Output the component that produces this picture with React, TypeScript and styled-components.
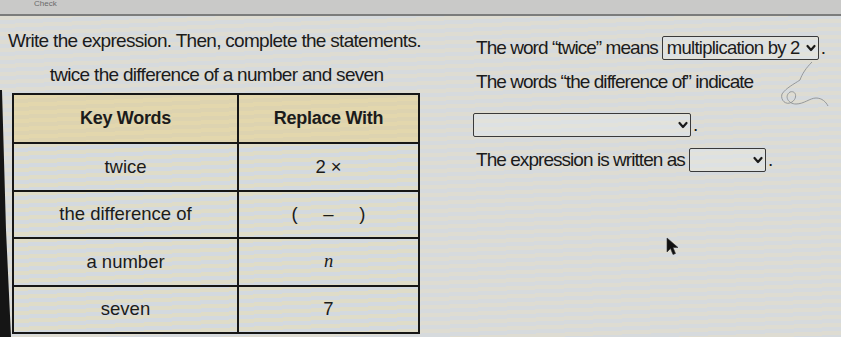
import React from "react"
import styled, { createGlobalStyle } from "styled-components"

const GlobalStyle = createGlobalStyle`
  html, body {
    margin: 0;
    padding: 0;
    background: #d9dbdb;
  }
  body {
    font-family: "Liberation Sans", Arial, sans-serif;
    color: #1b1b1b;
  }
`

const stripes = (a: string, b: string) => `
  repeating-linear-gradient(
    178deg,
    ${a} 0px,
    ${a} 4px,
    ${b} 4px,
    ${b} 8px
  )
`

const Screen = styled.div`
  position: relative;
  width: 841px;
  height: 337px;
  overflow: hidden;
  background: ${stripes("#dedcd2", "#d6dadd")};
`

const TopBar = styled.div`
  height: 14px;
  background: #c9c9c8;
  border-bottom: 2px solid #7b7c7c;
  overflow: hidden;
  padding-left: 34px;
`

const TopLabel = styled.span`
  display: block;
  font-size: 8px;
  line-height: 8px;
  color: #6a6a6a;
`

const Body = styled.div`
  display: grid;
  grid-template-columns: 420px 1fr;
`

const LeftColumn = styled.div`
  display: flex;
  flex-direction: column;
`

const Title = styled.div`
  margin: 13px 0 0 8px;
  height: 24px;
  line-height: 24px;
  font-size: 19px;
  letter-spacing: -0.7px;
  white-space: nowrap;
`

const Subtitle = styled.div`
  margin: 10px 0 0 13px;
  height: 24px;
  line-height: 24px;
  font-size: 19px;
  letter-spacing: -0.7px;
  text-align: center;
  white-space: nowrap;
`

const Table = styled.table`
  margin: 6px 0 0 12px;
  width: 408px;
  border-collapse: collapse;
  table-layout: fixed;
`

const HeadCell = styled.th`
  height: 47px;
  padding: 0;
  border: 2px solid #161616;
  background: ${stripes("#e3d7ad", "#ddd3b0")};
  font-size: 18px;
  font-weight: bold;
  letter-spacing: -0.3px;
  text-align: center;
`

const Cell = styled.td<{ $italic?: boolean }>`
  height: 45.5px;
  padding: 0;
  border: 2px solid #161616;
  background: ${stripes("#dfdcc8", "#d3d9df")};
  font-size: 18.5px;
  text-align: center;
  font-family: ${p => (p.$italic ? '"Liberation Serif", serif' : "inherit")};
  font-style: ${p => (p.$italic ? "italic" : "normal")};
  white-space: pre;
`

const RightColumn = styled.div`
  display: flex;
  flex-direction: column;
  padding-left: 56px;
`

const Line = styled.div<{ $top: number }>`
  display: flex;
  align-items: center;
  height: 24px;
  margin-top: ${p => p.$top}px;
  font-size: 19px;
  letter-spacing: -0.95px;
  white-space: nowrap;
`

const Select = styled.div<{ $width: number }>`
  display: flex;
  align-items: center;
  justify-content: space-between;
  box-sizing: border-box;
  width: ${p => p.$width}px;
  height: 24px;
  margin: 0 2px 0 4px;
  padding: 0 2px 0 4px;
  border: 1.5px solid #3a3a3a;
  border-radius: 2px;
  background: rgba(235, 237, 238, 0.35);
  font-size: 18.5px;
  letter-spacing: -0.75px;
`

const Chevron = () => (
  <svg width="10" height="8" viewBox="0 0 10 8">
    <polyline
      points="1.5,2 5,6 8.5,2"
      fill="none"
      stroke="#1b1b1b"
      strokeWidth="2.2"
      strokeLinecap="round"
      strokeLinejoin="round"
    />
  </svg>
)

const Cursor = styled.svg`
  position: absolute;
  left: 666px;
  top: 237px;
`

const Scribble = styled.svg`
  position: absolute;
  left: 770px;
  top: 60px;
`

const Bezel = styled.div`
  position: absolute;
  left: 0;
  top: 0;
  width: 14px;
  height: 337px;
  background: #151515;
  clip-path: polygon(0 90px, 2px 90px, 6px 230px, 11px 337px, 0 337px);
`

const rows: [string, string, boolean?][] = [
  ["twice", "2 ×"],
  ["the difference of", "(     –     )"],
  ["a number", "n", true],
  ["seven", "7"],
]

export default function App() {
  return (
    <>
      <GlobalStyle />
      <Screen>
        <TopBar>
          <TopLabel>Check</TopLabel>
        </TopBar>
        <Body>
          <LeftColumn>
            <Title>Write the expression. Then, complete the statements.</Title>
            <Subtitle>twice the difference of a number and seven</Subtitle>
            <Table>
              <colgroup>
                <col style={{ width: 225 }} />
                <col />
              </colgroup>
              <thead>
                <tr>
                  <HeadCell>Key Words</HeadCell>
                  <HeadCell>Replace With</HeadCell>
                </tr>
              </thead>
              <tbody>
                {rows.map(([word, value, italic]) => (
                  <tr key={word}>
                    <Cell>{word}</Cell>
                    <Cell $italic={italic}>{value}</Cell>
                  </tr>
                ))}
              </tbody>
            </Table>
          </LeftColumn>
          <RightColumn>
            <Line $top={20}>
              The word “twice” means
              <Select $width={157}>
                multiplication by 2
                <Chevron />
              </Select>
              .
            </Line>
            <Line $top={10}>The words “the difference of” indicate</Line>
            <Line $top={19}>
              <Select $width={218} style={{ marginLeft: -3 }}>
                <span />
                <Chevron />
              </Select>
              .
            </Line>
            <Line $top={11}>
              The expression is written as
              <Select $width={77}>
                <span />
                <Chevron />
              </Select>
              .
            </Line>
          </RightColumn>
        </Body>
        <Scribble width="62" height="52" viewBox="0 0 62 52">
          <path
            d="M42 2 C36 8 32 14 30 20 C24 24 16 28 12 34 C10 40 16 46 22 42 C28 38 26 30 20 32 C14 36 18 44 26 44 C34 44 40 38 46 38 C52 38 56 42 58 46"
            fill="none"
            stroke="#8d9194"
            strokeWidth="0.9"
          />
        </Scribble>
        <Cursor width="14" height="20" viewBox="0 0 14 20">
          <path d="M1 1 L1 15 L4.5 11.5 L7 17.5 L9.5 16.5 L7 10.5 L12 10.5 Z" fill="#111" stroke="#333" strokeWidth="0.6" />
        </Cursor>
        <Bezel />
      </Screen>
    </>
  )
}
